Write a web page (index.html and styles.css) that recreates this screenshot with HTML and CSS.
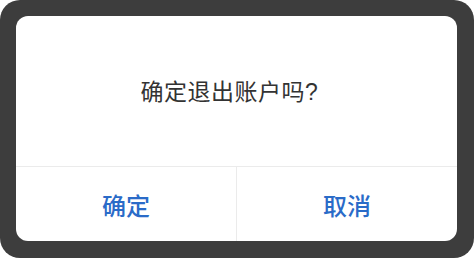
FILE: index.html
```html
<!DOCTYPE html>
<html lang="zh-CN">
<head>
<meta charset="utf-8">
<link rel="stylesheet" href="styles.css">
</head>
<body>
<div class="frame">
  <div class="dialog">
    <div class="message">确定退出账户吗?</div>
    <div class="actions">
      <div class="btn">确定</div>
      <div class="btn">取消</div>
    </div>
  </div>
</div>
</body>
</html>
```
FILE: styles.css
```css
html, body {
  margin: 0;
  padding: 0;
  background: #ffffff;
}
.frame {
  width: 474px;
  height: 258px;
  box-sizing: border-box;
  padding: 16px 17px 17px 16px;
  background: #3d3d3d;
  border-radius: 20px;
  display: flex;
}
.dialog {
  flex: 1;
  background: #ffffff;
  border-radius: 12px;
  display: flex;
  flex-direction: column;
  overflow: hidden;
  font-family: "Noto Sans CJK SC", "Noto Sans", sans-serif;
}
.message {
  height: 151px;
  display: flex;
  align-items: center;
  justify-content: center;
  font-family: "Liberation Sans", "Noto Sans CJK SC", sans-serif;
  font-size: 23px;
  letter-spacing: 0.5px;
  color: #333333;
  border-bottom: 1px solid #ebebeb;
  box-sizing: border-box;
  padding: 0 14px 2px 0;
}
.actions {
  flex: 1;
  display: flex;
}
.btn {
  flex: 1;
  display: flex;
  align-items: center;
  justify-content: center;
  font-size: 24px;
  font-weight: 500;
  color: #2a6bc8;
}
.btn + .btn {
  border-left: 1px solid #ebebeb;
}
```
